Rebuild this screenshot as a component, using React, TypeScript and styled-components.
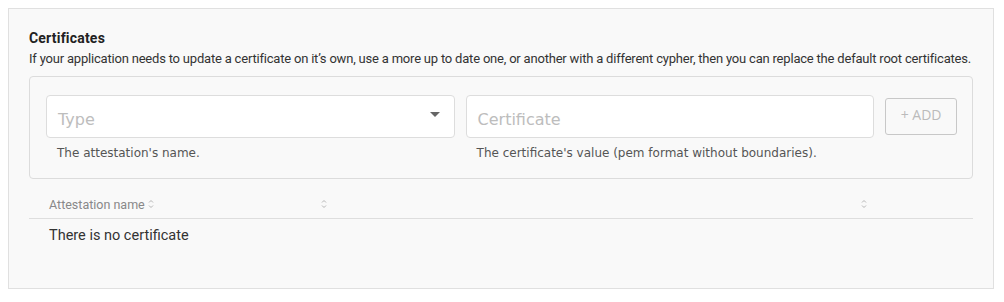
import React from 'react';
import styled, { createGlobalStyle } from 'styled-components';

const GlobalStyle = createGlobalStyle`
  body {
    margin: 8px;
    background: #fff;
    font-family: Roboto, 'Liberation Sans', sans-serif;
  }
`;

const Panel = styled.section`
  box-sizing: border-box;
  width: 986px;
  height: 281px;
  padding: 20px 20px 0 20px;
  background: #f9f9f9;
  border: 1px solid #e0e0e0;
`;

const Title = styled.h3`
  margin: 0;
  font-size: 14px;
  line-height: 18px;
  font-weight: 700;
  letter-spacing: 0.2px;
  color: #222;
`;

const Description = styled.p`
  margin: 3px 0 0;
  font-size: 13px;
  line-height: 18px;
  letter-spacing: -0.2px;
  color: #333;
  white-space: nowrap;
`;

const FormBox = styled.div`
  margin-top: 8px;
  display: flex;
  gap: 11px;
  align-items: flex-start;
  padding: 18px 15px 18px 16px;
  border: 1px solid #dcdcdc;
  border-radius: 4px;
`;

const Field = styled.div`
  width: 409px;
  display: flex;
  flex-direction: column;
`;

const InputBox = styled.div`
  box-sizing: border-box;
  height: 43px;
  display: flex;
  align-items: center;
  padding: 0 12px 0 11px;
  background: #fff;
  border: 1px solid #ddd;
  border-radius: 4px;
  font-family: 'DejaVu Sans', sans-serif;
  font-size: 16px;
  color: #bdbdbd;
`;

const Placeholder = styled.span`
  margin-top: 6px;
`;

const Caret = styled.span`
  margin-left: auto;
  margin-right: 2px;
  margin-top: -4px;
  width: 0;
  height: 0;
  border-left: 5px solid transparent;
  border-right: 5px solid transparent;
  border-top: 5px solid #666;
`;

const Helper = styled.div`
  margin-top: 8px;
  padding-left: 11px;
  font-family: 'DejaVu Sans', sans-serif;
  font-size: 12px;
  line-height: 14px;
  color: #555;
`;

const AddButton = styled.button`
  box-sizing: border-box;
  margin-top: 3px;
  width: 72px;
  height: 37px;
  background: transparent;
  border: 1px solid #c8c8c8;
  border-radius: 3px;
  font-family: 'Open Sans', sans-serif;
  font-size: 14px;
  color: #bbb;
  padding: 0 0 4px;
`;

const Table = styled.div`
  margin-top: 11px;
`;

const HeaderRow = styled.div`
  display: grid;
  grid-template-columns: 272px 540px 1fr;
  height: 28px;
  align-items: center;
  border-bottom: 1px solid #dedede;
  padding-left: 20px;
`;

const HeaderCell = styled.div`
  display: flex;
  align-items: center;
  gap: 3px;
  font-size: 12.5px;
  color: #888;
`;

const EmptyRow = styled.div`
  padding: 8px 0 0 20px;
  font-size: 14.5px;
  line-height: 18px;
  color: #333;
`;

const SortIcon = () => (
  <svg width="6" height="10" viewBox="0 0 6 10" fill="none" stroke="#b5b5b5" strokeWidth="1">
    <path d="M1 3.5 L3 1.5 L5 3.5" />
    <path d="M1 6.5 L3 8.5 L5 6.5" />
  </svg>
);

export default function App() {
  return (
    <>
      <GlobalStyle />
      <Panel>
        <Title>Certificates</Title>
        <Description>
          If your application needs to update a certificate on it’s own, use a more up to date one, or another with a
          different cypher, then you can replace the default root certificates.
        </Description>
        <FormBox>
          <Field>
            <InputBox>
              <Placeholder>Type</Placeholder>
              <Caret />
            </InputBox>
            <Helper>The attestation's name.</Helper>
          </Field>
          <Field>
            <InputBox>
              <Placeholder>Certificate</Placeholder>
            </InputBox>
            <Helper>The certificate's value (pem format without boundaries).</Helper>
          </Field>
          <AddButton>+ ADD</AddButton>
        </FormBox>
        <Table>
          <HeaderRow>
            <HeaderCell>
              Attestation name <SortIcon />
            </HeaderCell>
            <HeaderCell>
              <SortIcon />
            </HeaderCell>
            <HeaderCell>
              <SortIcon />
            </HeaderCell>
          </HeaderRow>
          <EmptyRow>There is no certificate</EmptyRow>
        </Table>
      </Panel>
    </>
  );
}
